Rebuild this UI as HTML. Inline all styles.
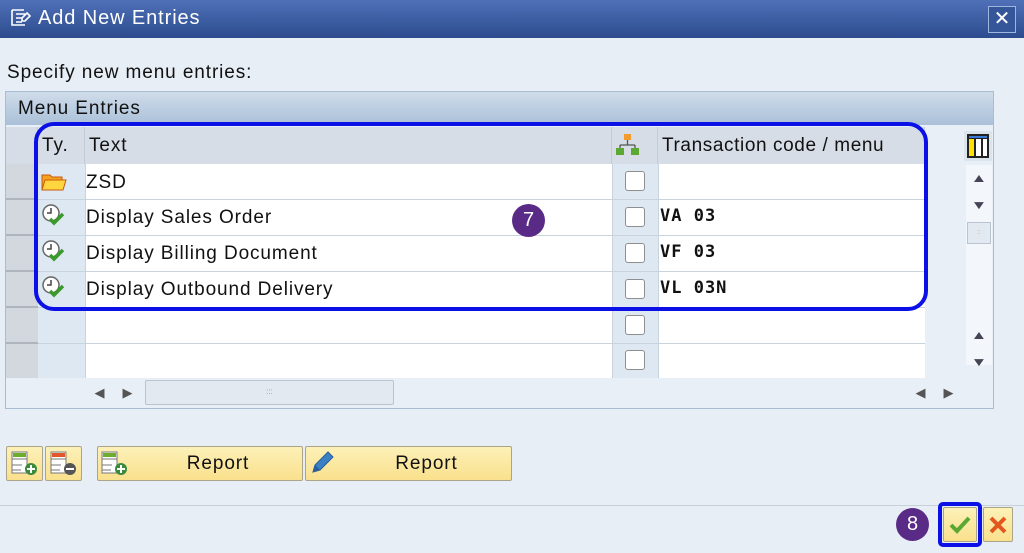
<!DOCTYPE html>
<html><head><meta charset="utf-8"><style>
*{box-sizing:border-box;margin:0;padding:0}
body{width:1024px;height:553px;overflow:hidden;background:#e8eef6;font-family:"Liberation Sans","DejaVu Sans",sans-serif;position:relative;color:#111}
.a{position:absolute}
.t{font-size:19px;letter-spacing:0.9px}
.title{left:0;top:0;width:1024px;height:38px;background:linear-gradient(#4f70b8,#2d4c8e);color:#fff}
.hdr{background:#d6dde6;border-right:1px solid #c3ccd6}
.cb{width:20px;height:20px;border:1.5px solid #8f8f8f;border-radius:3px;background:#fff}
.btn{background:linear-gradient(#fdf1b8,#f9e08c);border:1px solid #a9a48a;border-radius:2px}
.tc{font-family:"DejaVu Sans Mono","Liberation Mono",monospace;font-weight:bold;font-size:17px;letter-spacing:1px}
.ar{color:#555;font-size:13px;text-align:center;line-height:25px;width:25px;height:25px}
.av{color:#445;font-size:12px;text-align:center;line-height:22px;width:26px;height:22px;transform:scaleX(1.4)}
</style></head><body>
<div class="a title">
<svg class="a" style="left:10px;top:8px" width="22" height="20" viewBox="0 0 22 20"><path d="M2 2h12M2 2v15h13M6 6h9M6 10h6M6 14h6M17 5l3 3-5 5h-3v-3z" stroke="#fff" stroke-width="1.6" fill="none"/></svg>
<div class="a t" style="left:38px;top:7px;font-size:20px">Add New Entries</div>
<div class="a" style="left:988px;top:6px;width:28px;height:27px;border:1px solid #9fb6e0;background:#35579a;color:#fff;font-size:20px;text-align:center;line-height:24px">✕</div>
</div>
<div class="a t" style="left:7px;top:62px">Specify new menu entries:</div>
<div class="a" style="left:5px;top:91px;width:989px;height:318px;border:1px solid #a9bcd3;background:#e9eff6"></div>
<div class="a t" style="left:6px;top:92px;width:987px;height:33px;background:linear-gradient(#cfdcea,#aac0d8);padding:6px 0 0 12px">Menu Entries</div>
<div class="a" style="left:6px;top:127px;width:919px;height:251px;background:#fff"></div>
<div class="a hdr" style="left:6px;top:127px;width:32px;height:37px"></div>
<div class="a hdr t" style="left:38px;top:127px;width:47px;height:37px;padding:8px 0 0 4px">Ty.</div>
<div class="a hdr t" style="left:85px;top:127px;width:527px;height:37px;padding:8px 0 0 4px">Text</div>
<div class="a hdr" style="left:612px;top:127px;width:46px;height:37px"></div>
<svg class="a" style="left:615px;top:133px" width="26" height="24" viewBox="0 0 26 24"><rect x="9" y="1" width="7" height="6" fill="#f39b2d"/><path d="M12.5 7v5M5 12h15M5 12v3M20 12v3" stroke="#555" stroke-width="1.3" fill="none"/><rect x="1" y="15" width="8" height="7" fill="#5da832"/><rect x="16" y="15" width="8" height="7" fill="#5da832"/></svg>
<div class="a hdr t" style="left:658px;top:127px;width:267px;height:37px;padding:8px 0 0 4px;letter-spacing:0.6px">Transaction code / menu</div>
<div class="a" style="left:6px;top:164px;width:32px;height:214px;background:repeating-linear-gradient(#d3d8de 0 34px,#aeb5bd 34px 36px)"></div>
<div class="a" style="left:38px;top:164px;width:47px;height:214px;background:#dde8f3"></div>
<div class="a" style="left:612px;top:164px;width:46px;height:214px;background:#dde8f3"></div>
<div class="a" style="left:38px;top:164px;width:887px;height:214px;background:repeating-linear-gradient(transparent 0 35px,#c9d3de 35px 36px)"></div>
<div class="a" style="left:85px;top:164px;width:1px;height:214px;background:#c9d3de"></div>
<div class="a" style="left:612px;top:164px;width:1px;height:214px;background:#c9d3de"></div>
<div class="a" style="left:658px;top:164px;width:1px;height:214px;background:#c9d3de"></div>
<svg class="a" style="left:41px;top:172px" width="26" height="20" viewBox="0 0 26 20"><path d="M1 3h8l2 2h10v13H1z" fill="#f6a21a" stroke="#c85a10"/><path d="M4 8h21l-3 10H1z" fill="#ffd640" stroke="#c85a10"/></svg>
<div class="a t" style="left:86px;top:172px">ZSD</div>
<div class="a t" style="left:86px;top:207px">Display Sales Order</div>
<div class="a t" style="left:86px;top:243px">Display Billing Document</div>
<div class="a t" style="left:86px;top:279px">Display Outbound Delivery</div>
<div class="a tc" style="left:660px;top:206px">VA 03</div>
<div class="a tc" style="left:660px;top:242px">VF 03</div>
<div class="a tc" style="left:660px;top:278px">VL 03N</div>
<svg width="0" height="0" style="position:absolute"><defs><g id="ck"><circle cx="10" cy="10" r="8" fill="#fff" stroke="#666" stroke-width="1.5"/><path d="M10 5v5h-4" stroke="#444" stroke-width="1.5" fill="none"/><path d="M9 16l4 4 9-9" stroke="#3a9a2a" stroke-width="3.5" fill="none"/></g></defs></svg>
<svg class="a" style="left:41px;top:203px" width="26" height="24"><use href="#ck"/></svg>
<svg class="a" style="left:41px;top:239px" width="26" height="24"><use href="#ck"/></svg>
<svg class="a" style="left:41px;top:275px" width="26" height="24"><use href="#ck"/></svg>
<div class="a cb" style="left:625px;top:171px"></div>
<div class="a cb" style="left:625px;top:207px"></div>
<div class="a cb" style="left:625px;top:243px"></div>
<div class="a cb" style="left:625px;top:279px"></div>
<div class="a cb" style="left:625px;top:315px"></div>
<div class="a cb" style="left:625px;top:350px"></div>
<div class="a ar" style="left:87px;top:380px">◀</div>
<div class="a ar" style="left:115px;top:380px">▶</div>
<div class="a" style="left:145px;top:380px;width:249px;height:25px;background:#e2e9f1;border:1px solid #b9c4d0;border-radius:2px;font-size:8px;color:#999;text-align:center;line-height:22px">:::</div>
<div class="a ar" style="left:908px;top:380px">◀</div>
<div class="a ar" style="left:936px;top:380px">▶</div>
<div class="a" style="left:964px;top:131px;width:28px;height:30px;background:#dbe3ec"></div>
<svg class="a" style="left:966px;top:133px" width="24" height="26" viewBox="0 0 24 26"><rect x="1" y="1" width="22" height="24" fill="#222"/><rect x="3" y="6" width="5" height="17" fill="#ffe000"/><rect x="10" y="6" width="5" height="17" fill="#fff"/><rect x="17" y="6" width="4" height="17" fill="#fff"/><rect x="3" y="3" width="18" height="2" fill="#3a7bd5"/></svg>
<div class="a" style="left:966px;top:165px;width:26px;height:200px;background:#f3f6fa"></div>
<div class="a av" style="left:966px;top:167px">▲</div>
<div class="a av" style="left:966px;top:194px">▼</div>
<div class="a" style="left:967px;top:222px;width:24px;height:22px;background:#e3e9f0;border:1px solid #b9c4d0;font-size:7px;color:#aaa;text-align:center;line-height:20px">::</div>
<div class="a av" style="left:966px;top:324px">▲</div>
<div class="a av" style="left:966px;top:351px">▼</div>
<div class="a" style="left:34px;top:122px;width:894px;height:189px;border:4px solid #0a10e6;border-radius:20px"></div>
<div class="a" style="left:512px;top:204px;width:33px;height:33px;border-radius:50%;background:#5a2b86;color:#fff;font-size:20px;text-align:center;line-height:33px">7</div>
<div class="a btn" style="left:6px;top:446px;width:37px;height:35px"></div>
<div class="a btn" style="left:45px;top:446px;width:37px;height:35px"></div>
<div class="a btn t" style="left:97px;top:446px;width:206px;height:35px;text-align:center;line-height:34px;padding-left:36px">Report</div>
<div class="a btn t" style="left:305px;top:446px;width:207px;height:35px;text-align:center;line-height:34px;padding-left:36px">Report</div>
<svg width="0" height="0" style="position:absolute"><defs><g id="tb"><rect x="1" y="1" width="15" height="21" fill="#fff" stroke="#777"/><path d="M1 8h15M1 14h10M1 19h9" stroke="#777"/></g></defs></svg>
<svg class="a" style="left:11px;top:451px" width="28" height="26"><use href="#tb"/><rect x="2" y="2" width="13" height="4" fill="#6cad2c"/><circle cx="20" cy="18" r="6" fill="#3b8a3b"/><path d="M20 14v8M16 18h8" stroke="#fff" stroke-width="2"/></svg>
<svg class="a" style="left:50px;top:451px" width="28" height="26"><use href="#tb"/><rect x="2" y="2" width="13" height="4" fill="#e0552a"/><circle cx="20" cy="18" r="6" fill="#555"/><path d="M16 18h8" stroke="#fff" stroke-width="2"/></svg>
<svg class="a" style="left:101px;top:451px" width="28" height="26"><use href="#tb"/><rect x="2" y="2" width="13" height="4" fill="#6cad2c"/><circle cx="20" cy="18" r="6" fill="#3b8a3b"/><path d="M20 14v8M16 18h8" stroke="#fff" stroke-width="2"/></svg>
<svg class="a" style="left:309px;top:450px" width="26" height="26" viewBox="0 0 26 26"><path d="M4 22l2-7L19 2l5 5-13 13z" fill="#3b7fc4" stroke="#2a5f9a"/><path d="M4 22l2-7 5 5z" fill="#2a5f9a"/></svg>
<div class="a" style="left:0;top:505px;width:1024px;height:1px;background:#c8d0da"></div>
<div class="a" style="left:896px;top:508px;width:33px;height:33px;border-radius:50%;background:#5a2b86;color:#fff;font-size:20px;text-align:center;line-height:33px">8</div>
<div class="a" style="left:938px;top:502px;width:44px;height:45px;border:4px solid #0a10e6;border-radius:5px"></div>
<div class="a btn" style="left:943px;top:507px;width:34px;height:35px"></div>
<svg class="a" style="left:948px;top:513px" width="24" height="22"><path d="M3 12l6 6L21 5" stroke="#5aa832" stroke-width="4" fill="none"/></svg>
<div class="a btn" style="left:983px;top:507px;width:30px;height:35px"></div>
<svg class="a" style="left:987px;top:514px" width="22" height="22"><path d="M4 4l14 14M18 4L4 18" stroke="#e2571e" stroke-width="4"/></svg>
</body></html>
